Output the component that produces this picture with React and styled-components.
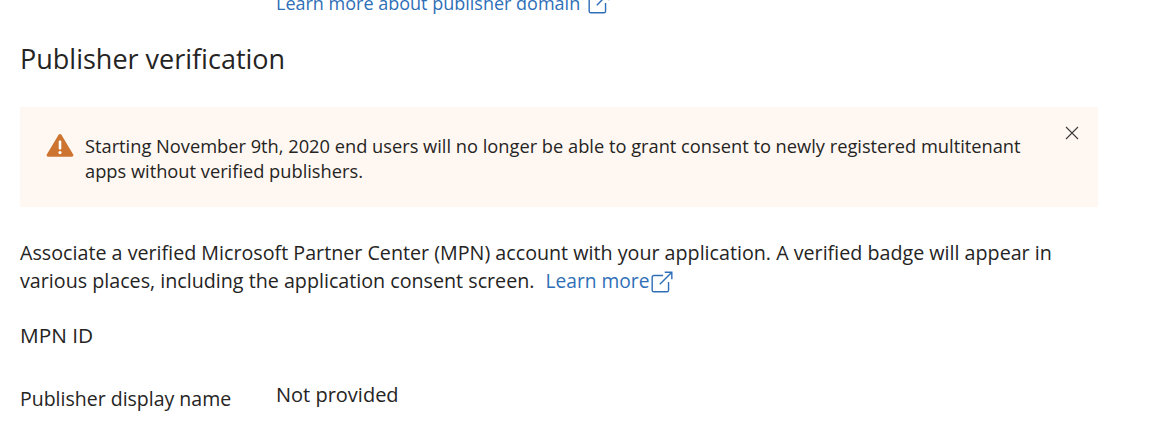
import React from 'react';
import styled, { createGlobalStyle } from 'styled-components';

const GlobalStyle = createGlobalStyle`
  html, body {
    margin: 0;
    padding: 0;
    background: #fff;
    overflow: hidden;
  }
  body {
    font-family: "Open Sans", "Noto Sans", sans-serif;
    color: #252423;
  }
`;

const Page = styled.div`
  width: 1166px;
  height: 426px;
  overflow: hidden;
  padding: 0 0 0 20px;
  box-sizing: border-box;
`;

const TopLink = styled.a`
  display: flex;
  align-items: center;
  gap: 7px;
  margin: -9px 0 0 256px;
  height: 24px;
  font-size: 18px;
  color: #2f6fb7;
`;

const Title = styled.h2`
  margin: 24px 0 0;
  font-size: 27px;
  line-height: 40px;
  font-weight: 400;
  color: #252423;
`;

const Banner = styled.div`
  display: flex;
  align-items: flex-start;
  width: 1078px;
  height: 100px;
  margin-top: 28px;
  padding: 26px 18px 0 26px;
  box-sizing: border-box;
  background: #fff8f2;
`;

const WarnIcon = styled.svg`
  width: 28px;
  height: 24px;
  flex: none;
  margin: 0 11px 0 0;
`;

const BannerText = styled.div`
  flex: 1;
  font-size: 18.25px;
  line-height: 25px;
  color: #252423;
`;

const CloseButton = styled.button`
  flex: none;
  width: 16px;
  height: 16px;
  padding: 0;
  margin: -8px 0 0 20px;
  border: 0;
  background: none;
  color: #3b3a39;
  display: block;
`;

const Description = styled.p`
  width: 1060px;
  margin: 32px 0 0;
  font-size: 19.7px;
  line-height: 28px;
`;

const InlineLink = styled.a`
  color: #2f6fb7;
  margin-left: 11px;
  font-size: 19.2px;
`;

const ExternalIcon = styled.svg`
  display: ${(p) => (p.$inline ? 'inline-block' : 'block')};
  width: 24px;
  height: 24px;
  vertical-align: -6px;
  margin-left: ${(p) => (p.$inline ? '1px' : '0')};
  flex: none;
`;

const Field = styled.div`
  display: flex;
  align-items: flex-start;
  font-size: 19.5px;
  line-height: 28px;
  margin-top: ${(p) => p.$top}px;
`;

const FieldLabel = styled.div`
  width: 256px;
  flex: none;
  font-size: ${(p) => p.$size || 19.5}px;
  padding-top: ${(p) => p.$drop || 0}px;
`;

const FieldValue = styled.div`
  font-size: 20px;
  padding-top: 1px;
`;

const External = ({ inline }) => (
  <ExternalIcon $inline={inline} viewBox="0 0 22 22" fill="none" stroke="#2f6fb7" strokeWidth="1.3">
    <path d="M12 5H3.5C2.7 5 2 5.7 2 6.5v12c0 .8.7 1.5 1.5 1.5h12c.8 0 1.5-.7 1.5-1.5V11" />
    <path d="M9 13L20 2M13.5 2H20v6.5" />
  </ExternalIcon>
);

export default function App() {
  return (
    <Page>
      <GlobalStyle />
      <TopLink>
        Learn more about publisher domain
        <External />
      </TopLink>
      <Title>Publisher verification</Title>
      <Banner>
        <WarnIcon viewBox="0 0 28 24">
          <path
            fill="#cc7430"
            d="M14 1c.6 0 1.1.3 1.4.8l11.8 19.6c.6 1-.1 2.3-1.4 2.3H2.2C.9 23.7.2 22.4.8 21.4L12.6 1.8c.3-.5.8-.8 1.4-.8z"
          />
          <rect x="12.7" y="7.5" width="2.6" height="9" rx="1" fill="#fff" />
          <circle cx="14" cy="19.6" r="1.6" fill="#fff" />
        </WarnIcon>
        <BannerText>
          Starting November 9th, 2020 end users will no longer be able to grant consent to newly registered multitenant
          apps without verified publishers.
        </BannerText>
        <CloseButton aria-label="Dismiss">
          <svg viewBox="0 0 16 16" width="16" height="16" stroke="currentColor" strokeWidth="1.1">
            <path d="M2 2l12 12M14 2L2 14" />
          </svg>
        </CloseButton>
      </Banner>
      <Description>
        Associate a verified Microsoft Partner Center (MPN) account with your application. A verified badge will appear
        in various places, including the application consent screen.
        <InlineLink>
          Learn more
          <External inline />
        </InlineLink>
      </Description>
      <Field $top={26}>
        <FieldLabel $size={20.8}>MPN ID</FieldLabel>
      </Field>
      <Field $top={31}>
        <FieldLabel $drop={5}>Publisher display name</FieldLabel>
        <FieldValue>Not provided</FieldValue>
      </Field>
    </Page>
  );
}
